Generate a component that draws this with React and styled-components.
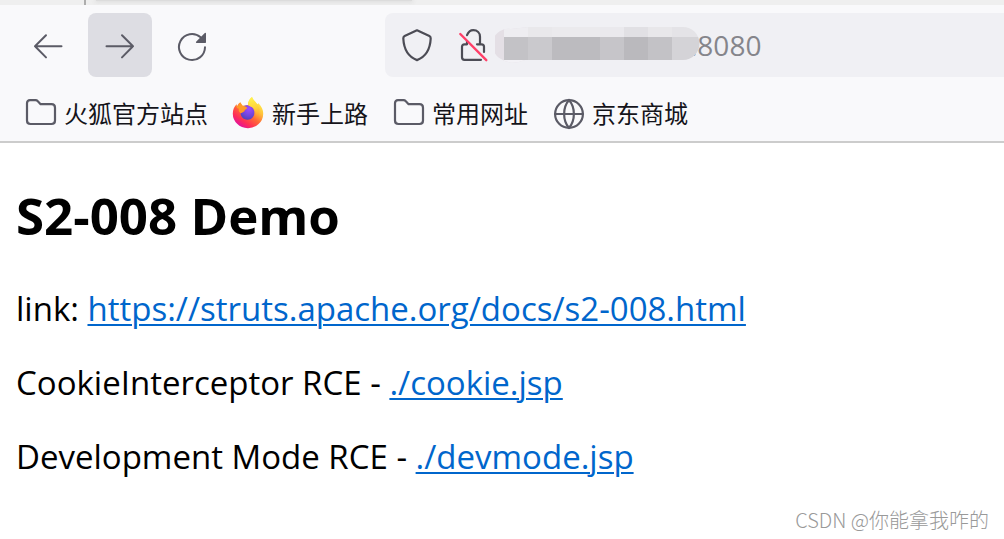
import React from "react";
import styled, { createGlobalStyle } from "styled-components";

const GlobalStyle = createGlobalStyle`
  * { box-sizing: border-box; }
  body {
    margin: 0;
    background: #fff;
    color: #000;
    font-family: "Open Sans", "Noto Sans CJK SC", sans-serif;
  }
`;

const Window = styled.div`
  position: relative;
  display: flex;
  flex-direction: column;
  min-height: 100vh;
`;

const Chrome = styled.header`
  background: #f9f9fb;
  border-bottom: 2px solid #cccccc;
`;

const TabStrip = styled.div`
  display: flex;
  height: 5px;
  gap: 10px;
  overflow: hidden;
  background: #efefef;
`;

const TabDivider = styled.div`
  width: 86px;
  border-right: 2px solid #adadad;
`;

const ActiveTab = styled.div`
  width: 316px;
  height: 1px;
  background: #dcdcdc;
  box-shadow: 0 0 4px 1px #d8d8d8;
`;

const Toolbar = styled.div`
  display: flex;
  gap: 8px;
  padding: 8px 0 8px 16px;
`;

const NavButton = styled.button`
  display: grid;
  place-items: center;
  width: 64px;
  height: 64px;
  padding: 0;
  border: 0;
  border-radius: 8px;
  background: ${(p) => (p.$active ? "#dddde3" : "transparent")};
  color: #5b5b66;
`;

const Icon = styled.svg`
  display: block;
  flex: none;
  width: 32px;
  height: 32px;
  fill: none;
  stroke: currentColor;
  stroke-width: ${(p) => p.$weight || 2};
  stroke-linecap: round;
  stroke-linejoin: round;
  overflow: visible;
`;

const AddressBar = styled.div`
  display: flex;
  flex: 1;
  align-items: center;
  min-width: 0;
  height: 64px;
  margin-left: 153px;
  padding-left: 16px;
  border-radius: 8px 0 0 8px;
  background: #f0f0f4;
  color: #4c4c55;
`;

const SiteIcons = styled.div`
  display: flex;
  gap: 24px;
`;

const Mosaic = styled(Icon)`
  z-index: 1;
  width: 204px;
  height: 40px;
  margin: 0 -9px 0 6px;
  stroke: none;
`;

const AddressInput = styled.input`
  flex: 1;
  min-width: 0;
  padding: 0;
  border: 0;
  outline: 0;
  background: transparent;
  color: #85858b;
  font: 28px/40px "Open Sans", sans-serif;
`;

const Bookmarks = styled.nav`
  display: flex;
  gap: 24px;
  padding: 8px 24px;
`;

const Bookmark = styled.a`
  display: flex;
  align-items: center;
  gap: 8px;
  height: 40px;
  color: #15141a;
  font: 24px/40px "Noto Sans CJK SC", sans-serif;
  white-space: nowrap;
  text-decoration: none;

  svg { color: #5b5b66; }
`;

const Page = styled.main`
  flex: 1;
  padding: 36px 16px 32px;
`;

const Title = styled.h1`
  margin: 0 0 34px;
  font-size: 51px;
  font-weight: 700;
  line-height: 72px;
`;

const Line = styled.p`
  margin: 0 0 26px;
  font-size: 33px;
  line-height: 48px;
`;

const Link = styled.a`
  color: #0066cc;
  text-decoration: underline;
  text-decoration-thickness: 2px;
  text-underline-offset: 3px;
`;

const Watermark = styled.footer`
  position: absolute;
  right: 15px;
  bottom: 4px;
  color: #999;
  font: 300 20px/30px "Noto Sans CJK SC", sans-serif;
`;

const BackIcon = () => (
  <Icon viewBox="0 0 32 32" aria-hidden="true">
    <path d="M29.5 17.3H3M14 6.2 3 17.3 14 28.4" />
  </Icon>
);

const ForwardIcon = () => (
  <Icon viewBox="0 0 32 32" aria-hidden="true">
    <path d="M2.5 17.3H29M18 6.2 29 17.3 18 28.4" />
  </Icon>
);

const ReloadIcon = () => (
  <Icon viewBox="0 0 32 32" aria-hidden="true">
    <path d="M29 18.2A13 13 0 1 1 24.6 8.3" />
    <path d="M29.3 4.6V13.3H20.6Z" fill="currentColor" strokeWidth="1.4" />
  </Icon>
);

const ShieldIcon = () => (
  <Icon viewBox="0 0 32 32" $weight={2.2} aria-hidden="true">
    <path d="M16 1.3 28.4 7Q29.8 7.8 29.7 9.5C29.2 19.5 25.5 27.5 16 31.1 6.5 27.5 2.8 19.5 2.3 9.5Q2.2 7.800 3.6 7Z" />
  </Icon>
);

const LockIcon = () => (
  <Icon viewBox="0 0 32 32" $weight={2.2} aria-hidden="true">
    <path d="M10 6.2C11.3 3 13.4 1.2 16.3 1.2 20.2 1.2 23 3.8 23 7.8V15.3H24.5Q27 15.3 27 17.8V23M20 15.3H23M10 12V15.3H7.5Q5 15.3 5 17.8V28.3Q5 30.8 7.5 30.8H24" />
    <path d="M3.3 5 29.3 31.2" stroke="#ff3f68" strokeWidth="2.4" />
  </Icon>
);

const FolderIcon = () => (
  <Icon viewBox="0 -1 32 32" $weight={2.2} aria-hidden="true">
    <path d="M6 2.2H11.500Q12.800 2.200 13.600 3.100L16.600 6.200H27.500Q31 6.200 31 9.700V22.500Q31 26 27.500 26H6.500Q3 26 3 22.500V5.200Q3 2.200 6 2.200Z" />
  </Icon>
);

const GlobeIcon = () => (
  <Icon viewBox="0 -1 32 32" $weight={2.2} aria-hidden="true">
    <circle cx="17" cy="16" r="13.9" />
    <path d="M3 16H31M17 2C10.500 9.500 10.500 22.500 17 30M17 2C23.500 9.500 23.500 22.500 17 30" />
  </Icon>
);

const FirefoxIcon = () => (
  <Icon viewBox="0 0 32 32" aria-hidden="true">
    <defs>
      <linearGradient id="flame" x1="0.85" y1="0.1" x2="0.25" y2="0.95">
        <stop offset="0" stopColor="#fff44f" />
        <stop offset="0.3" stopColor="#ffc13a" />
        <stop offset="0.55" stopColor="#ff6a36" />
        <stop offset="0.8" stopColor="#ff2f55" />
        <stop offset="1" stopColor="#e3129b" />
      </linearGradient>
      <linearGradient id="tail" x1="0.4" y1="0" x2="0.5" y2="1">
        <stop offset="0" stopColor="#fff44f" />
        <stop offset="0.5" stopColor="#ffd338" />
        <stop offset="1" stopColor="#ff8a2a" stopOpacity="0" />
      </linearGradient>
      <radialGradient id="orb" cx="0.6" cy="0.25" r="0.8">
        <stop offset="0" stopColor="#a14bff" />
        <stop offset="0.6" stopColor="#7045dc" />
        <stop offset="1" stopColor="#4a43b5" />
      </radialGradient>
    </defs>
    <g stroke="none">
      <path fill="url(#flame)" d="M20 0C20.8 2.8 23.6 4.6 25.2 7.3L26.5 6.2C29.8 9.6 31.4 13.2 31.2 17A15.2 14.4 0 0 1 .8 16.6C.8 12.4 2.3 9.6 4.5 7.2L5 10C5.4 7.7 6.6 6.2 8.5 5.2 8.6 6.8 9.3 8 10.6 8.7L16 8C16.1 5 17.4 2 20 0Z" />
      <path fill="url(#orb)" d="M11 9.8C15 6.3 21.6 9 22.3 14.5 23 19.8 19 23 15.3 22.7 11.3 22.5 8.5 19.3 8.7 16.2L13 14Z" />
      <path fill="url(#tail)" d="M20 0C20.8 2.8 23.6 4.6 25.2 7.3 28.8 12 28.3 19 24 23 24.8 18.6 24.3 13.8 21.5 11 19.5 9.3 16.1 9.5 16 7 16.1 4.5 17.4 2 20 0Z" />
      <path fill="#ff9b27" d="M4.5 7.5 5.5 9.5 8.5 5.5 10.6 8.7C11.9 9 13.5 9.2 15.3 10.7 14.8 12.2 12.5 12.5 12 13.8 11.7 15.3 9.8 15.6 8.7 16.2 6.5 15 6.5 13 7 11.6 5.2 11.9 4 10.5 4.5 7.5Z" />
    </g>
  </Icon>
);

const BLOCKS = [
  ["#eeedf1", "#c3c2c6"],
  ["#e9e8eb", "#cac9cd"],
  ["#ebeaed", "#bcbbbf"],
  ["#ebeaed", "#bcbbbf"],
  ["#eae9ed", "#c6c5c9"],
  ["#e1e0e4", "#bab9bd"],
  ["#e8e7ea", "#c3c2c6"],
  ["#e4e3e7", "#d4d3d7"],
  ["#e4e3e7", "#d4d3d7"],
];

const HostMosaic = () => (
  <Mosaic viewBox="0 0 204 40" aria-hidden="true">
    <clipPath id="host">
      <path d="M16 4 34 2H188A16.500 16.500 0 0 1 188 35H30Q16 41 6 34A16 16 0 0 1 16 4Z" />
    </clipPath>
    <g clipPath="url(#host)">
      <rect width="40" height="40" fill="#e4dfe5" />
      {BLOCKS.map(([top, bottom], i) => (
        <React.Fragment key={i}>
          <rect x={9 + i * 24} y="0" width="24" height="12" fill={top} />
          <rect x={9 + i * 24} y="12" width="24" height="23" fill={bottom} />
        </React.Fragment>
      ))}
      <rect x="9" y="35" width="30" height="5" fill="#f3f2f6" />
    </g>
  </Mosaic>
);

const BOOKMARKS = [
  ["火狐官方站点", FolderIcon],
  ["新手上路", FirefoxIcon],
  ["常用网址", FolderIcon],
  ["京东商城", GlobeIcon],
];

export default function App() {
  return (
    <Window>
      <GlobalStyle />
      <Chrome>
        <TabStrip>
          <TabDivider />
          <ActiveTab />
        </TabStrip>
        <Toolbar>
          <NavButton type="button" aria-label="后退"><BackIcon /></NavButton>
          <NavButton type="button" aria-label="前进" $active><ForwardIcon /></NavButton>
          <NavButton type="button" aria-label="刷新"><ReloadIcon /></NavButton>
          <AddressBar>
            <SiteIcons>
              <ShieldIcon />
              <LockIcon />
            </SiteIcons>
            <HostMosaic />
            <AddressInput aria-label="地址" defaultValue=":8080" />
          </AddressBar>
        </Toolbar>
        <Bookmarks>
          {BOOKMARKS.map(([label, Glyph]) => (
            <Bookmark href="#" key={label}>
              <Glyph />
              {label}
            </Bookmark>
          ))}
        </Bookmarks>
      </Chrome>
      <Page>
        <Title>S2-008 Demo</Title>
        <Line>
          link: <Link href="https://struts.apache.org/docs/s2-008.html">https://struts.apache.org/docs/s2-008.html</Link>
        </Line>
        <Line>
          CookieInterceptor RCE - <Link href="./cookie.jsp">./cookie.jsp</Link>
        </Line>
        <Line>
          Development Mode RCE - <Link href="./devmode.jsp">./devmode.jsp</Link>
        </Line>
      </Page>
      <Watermark>CSDN @你能拿我咋的</Watermark>
    </Window>
  );
}
